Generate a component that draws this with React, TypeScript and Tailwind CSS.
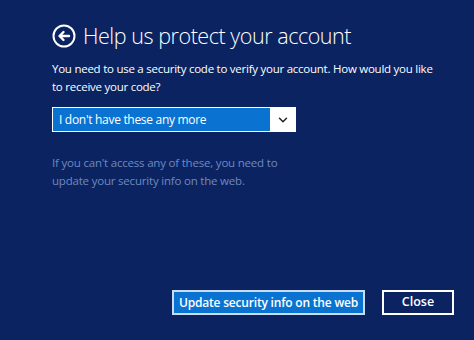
import { ChevronDown } from "lucide-react";

function BackIcon() {
  return (
    <svg width="24" height="24" viewBox="0 0 24 24" fill="none" stroke="white">
      <circle cx="12" cy="12" r="10.5" strokeWidth="2" />
      <path d="M17 12H8M11.5 8L7.5 12L11.5 16" strokeWidth="2.4" strokeLinecap="round" strokeLinejoin="round" />
    </svg>
  );
}

export default function App() {
  return (
    <div
      className="w-[474px] h-[340px] bg-[#0b2461] text-white flex flex-col px-[52px] pt-[22px] pb-[25px]"
      style={{ fontFamily: '"Open Sans", "Noto Sans", sans-serif' }}
    >
      <div className="flex items-center gap-[7px]">
        <BackIcon />
        <h1 className="text-[21.5px] font-light leading-[28px] tracking-[-0.45px]">Help us protect your account</h1>
      </div>
      <p className="mt-[10px] w-[392px] text-[11.5px] leading-[18px] tracking-[-0.25px]">
        You need to use a security code to verify your account. How would you like to receive your code?
      </p>
      <div className="mt-[11px] w-[244px] h-[25px] border border-white flex">
        <div className="flex-1 bg-[#0a73d1] flex items-center px-[6px] text-[12px] tracking-[-0.3px]">
          I don't have these any more
        </div>
        <div className="w-[25px] bg-white flex items-center justify-center">
          <ChevronDown className="w-[14px] h-[14px] text-[#222]" strokeWidth={2.5} />
        </div>
      </div>
      <p className="mt-[22px] text-[11.5px] leading-[18px] tracking-[-0.2px] text-[#6f88c0] w-[245px]">
        If you can't access any of these, you need to update your security info on the web.
      </p>
      <div className="mt-auto flex justify-end gap-[17px] -mr-[32px]">
        <button className="w-[193px] h-[25px] bg-[#0a73d1] border-2 border-[#c9dcf2] text-[12px] font-semibold tracking-[-0.2px]">
          Update security info on the web
        </button>
        <button className="w-[72px] h-[25px] bg-[#0b2461] border-2 border-white text-[12.5px] font-semibold">
          Close
        </button>
      </div>
    </div>
  );
}
